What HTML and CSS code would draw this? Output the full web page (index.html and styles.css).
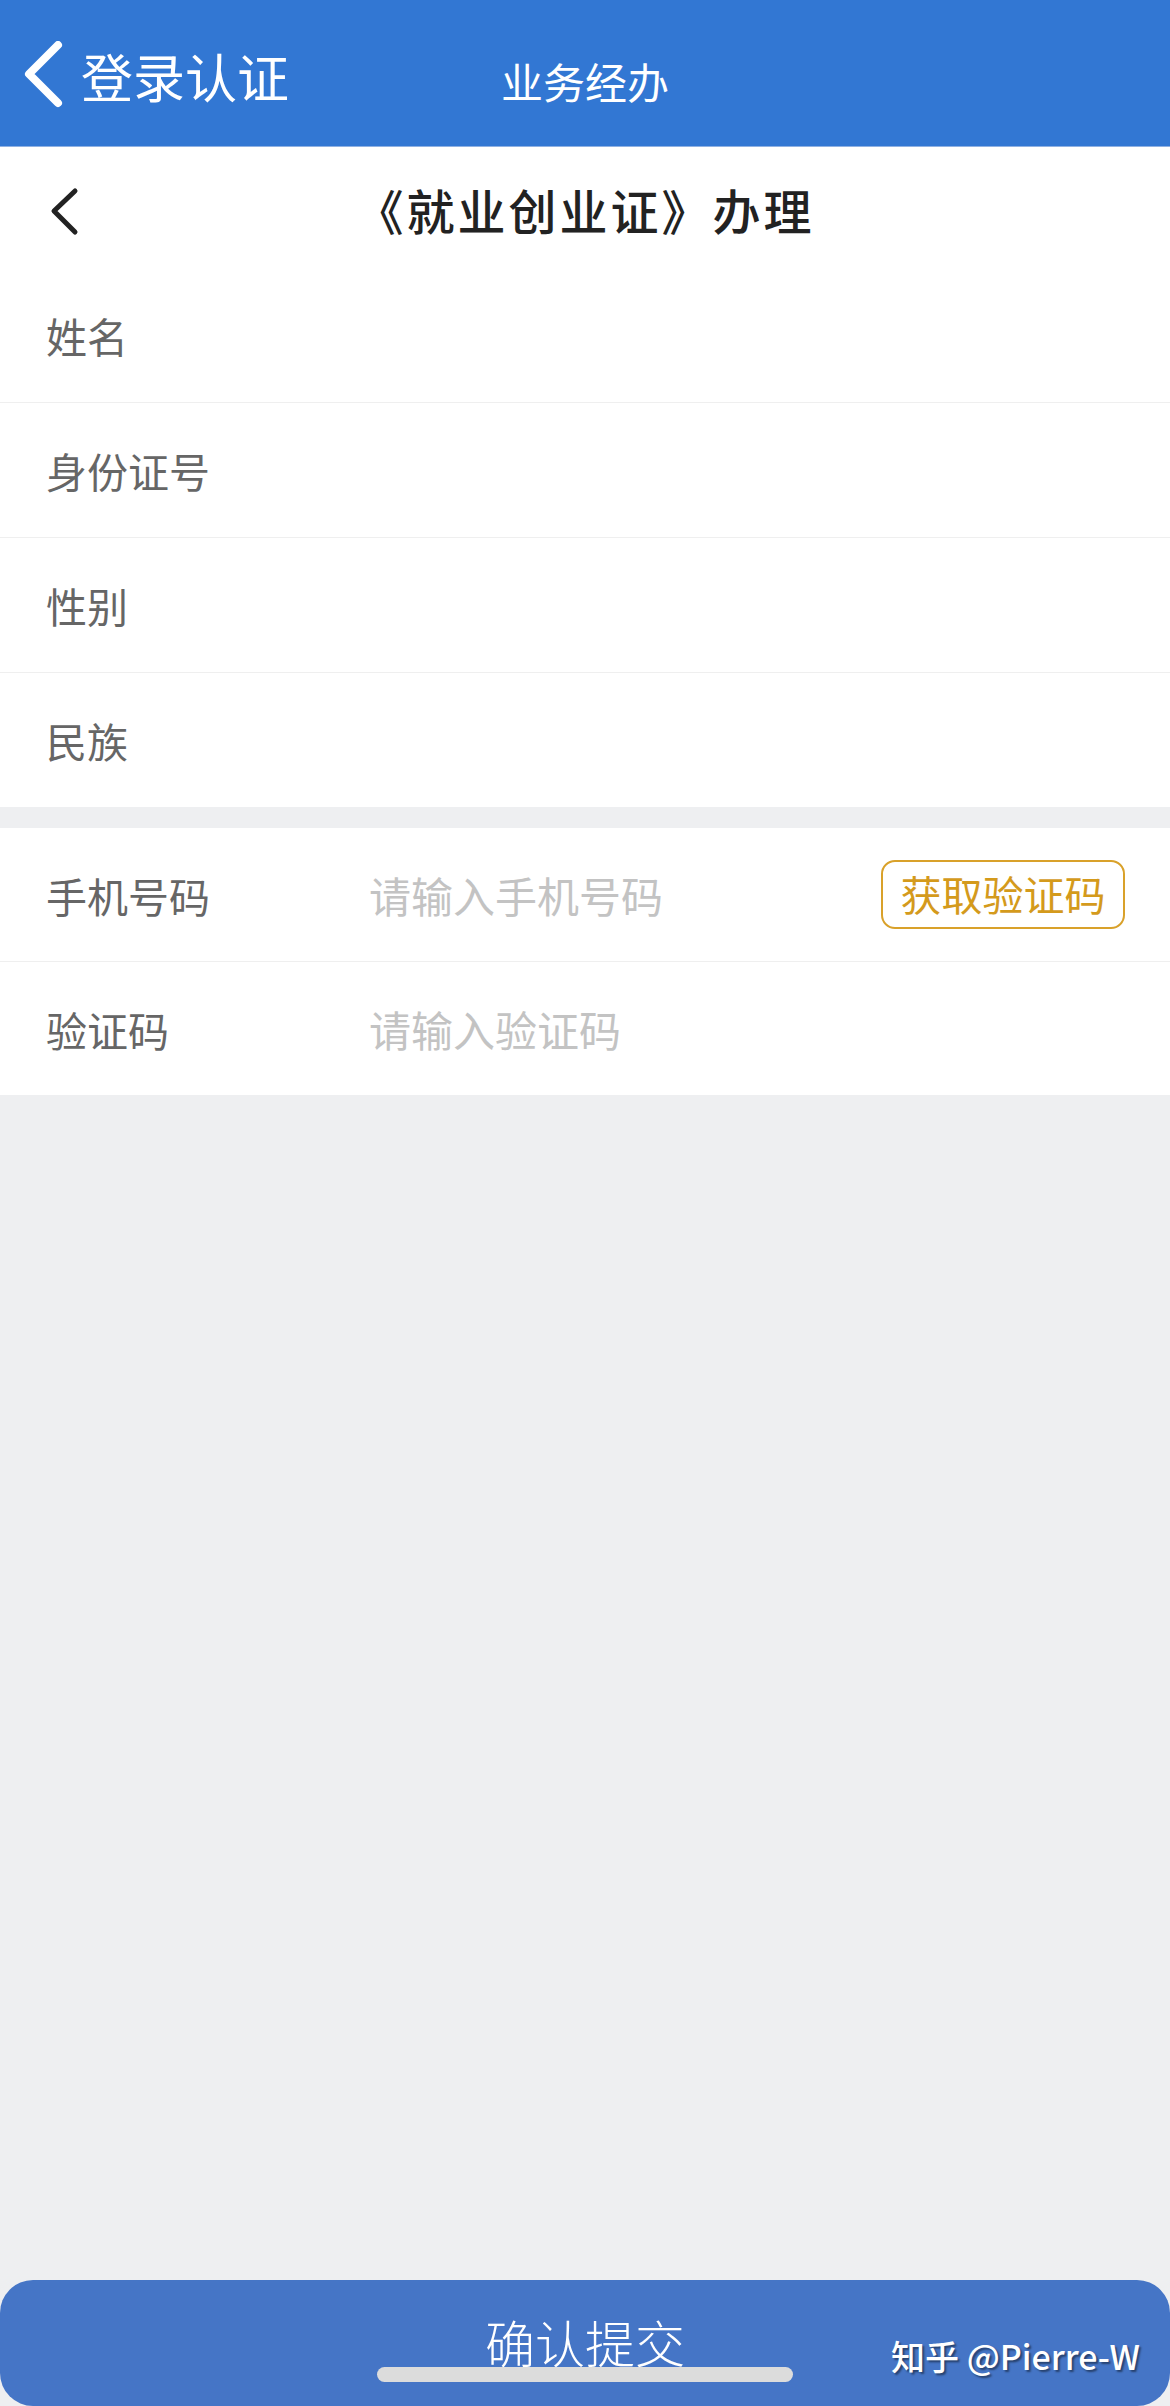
FILE: index.html
```html
<!DOCTYPE html>
<html lang="zh-CN">
<head>
<meta charset="utf-8">
<title>《就业创业证》办理</title>
<link rel="stylesheet" href="styles.css">
</head>
<body>
<div class="page">
  <header class="topbar">
    <div class="back">
      <svg class="back-icon" width="44" height="70" viewBox="0 0 44 70"><polyline points="35,4 6,33 35,62" fill="none" stroke="#fff" stroke-width="8" stroke-linecap="round" stroke-linejoin="round"/></svg>
      <span class="back-text">登录认证</span>
    </div>
    <div class="top-title">业务经办</div>
  </header>

  <div class="subhead">
    <svg class="sub-back" width="34" height="50" viewBox="0 0 34 50"><polyline points="26,4 5,24 26,45" fill="none" stroke="#222" stroke-width="5" stroke-linecap="round" stroke-linejoin="round"/></svg>
    <div class="sub-title">《就业创业证》办理</div>
  </div>

  <section class="group">
    <div class="row"><span class="label">姓名</span></div>
    <div class="row"><span class="label">身份证号</span></div>
    <div class="row"><span class="label">性别</span></div>
    <div class="row"><span class="label">民族</span></div>
  </section>

  <section class="group group-second">
    <div class="row row-sm">
      <span class="label">手机号码</span>
      <span class="placeholder">请输入手机号码</span>
      <span class="code-btn">获取验证码</span>
    </div>
    <div class="row row-sm">
      <span class="label">验证码</span>
      <span class="placeholder">请输入验证码</span>
    </div>
  </section>

  <div class="spacer"></div>

  <footer class="submit">
    <span class="submit-text">确认提交</span>
    <span class="home-bar"></span>
    <span class="watermark">知乎 @Pierre-W</span>
  </footer>
</div>
</body>
</html>
```
FILE: styles.css
```css
html, body {
  margin: 0;
  padding: 0;
}
body {
  background: #eeeff1;
  font-family: "Noto Sans CJK SC", "Noto Sans", sans-serif;
}
.page {
  width: 1170px;
  height: 2406px;
  display: flex;
  flex-direction: column;
  background: #eeeff1;
  overflow: hidden;
}
.topbar {
  position: relative;
  height: 146px;
  flex: none;
  background: #3277d3;
  border-bottom: 1px solid #8fb1e3;
  display: flex;
  align-items: center;
}
.back {
  display: flex;
  align-items: center;
  padding-left: 23px;
  padding-top: 6px;
}
.back-icon {
  display: block;
}
.back-text {
  color: #fff;
  font-size: 52px;
  line-height: 60px;
  margin-left: 14px;
}
.top-title {
  position: absolute;
  left: 0;
  right: 0;
  top: 56px;
  text-align: center;
  color: #fff;
  font-size: 42px;
  line-height: 50px;
}
.subhead {
  position: relative;
  height: 121px;
  flex: none;
  background: #fff;
  display: flex;
  align-items: center;
}
.sub-back {
  display: block;
  margin-left: 49px;
  margin-top: 8px;
}
.sub-title {
  position: absolute;
  left: 0;
  right: 0;
  top: 30px;
  text-align: center;
  font-size: 48px;
  line-height: 64px;
  font-weight: 500;
  letter-spacing: 3px;
  color: #222;
  padding-left: 0;
}
.group {
  background: #fff;
  flex: none;
}
.group-second {
  margin-top: 21px;
}
.row {
  height: 134px;
  display: flex;
  align-items: center;
  padding: 0 45px 0 46px;
  border-bottom: 1px solid #efefef;
}
.row:last-child {
  border-bottom: none;
}
.row-sm {
  height: 133px;
}
.label {
  width: 323px;
  flex: none;
  font-size: 41px;
  color: #666;
  line-height: 50px;
}
.placeholder {
  flex: 1;
  font-size: 42px;
  color: #c3c3c3;
  line-height: 50px;
}
.code-btn {
  flex: none;
  width: 240px;
  height: 65px;
  border: 2px solid #d9a12a;
  border-radius: 14px;
  color: #d49a1c;
  font-size: 41px;
  line-height: 63px;
  text-align: center;
}
.spacer {
  flex: 1;
}
.submit {
  position: relative;
  flex: none;
  height: 126px;
  background: #4575c6;
  border-radius: 33px;
  display: flex;
  align-items: center;
  justify-content: center;
}
.submit-text {
  color: #fff;
  font-size: 50px;
  line-height: 60px;
  font-weight: 300;
  margin-top: -4px;
}
.home-bar {
  position: absolute;
  left: 377px;
  top: 87px;
  width: 416px;
  height: 15px;
  border-radius: 8px;
  background: #dcdcdc;
}
.watermark {
  position: absolute;
  right: 30px;
  top: 56px;
  color: #fff;
  font-size: 34px;
  line-height: 40px;
  font-weight: 500;
  text-shadow: 2px 2px 2px rgba(0, 0, 0, 0.45);
}
```
